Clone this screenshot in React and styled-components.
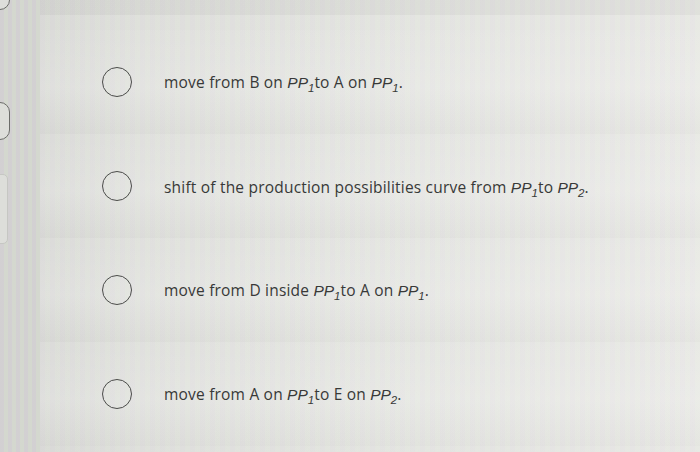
import * as React from 'react';
import styled, { createGlobalStyle } from 'styled-components';

const GlobalStyle = createGlobalStyle`
  html, body {
    margin: 0;
    padding: 0;
    width: 700px;
    height: 452px;
    overflow: hidden;
    background: #dcddd9;
  }
`;

const Screen = styled.div`
  width: 700px;
  height: 452px;
  display: flex;
  font-family: 'Open Sans', Lato, sans-serif;
  color: #383938;
  background: linear-gradient(90deg, #d9dad6 0%, #e1e2de 20%, #e7e8e4 60%, #ebebe8 100%);
`;

const Sidebar = styled.div`
  width: 40px;
  flex-shrink: 0;
  display: flex;
  flex-direction: column;
  background:
    repeating-linear-gradient(90deg, rgba(200, 190, 205, 0.3) 0 4px, rgba(205, 215, 195, 0.3) 4px 8px),
    #d7d8d4;
`;

const Tab = styled.div`
  margin-left: -14px;
  width: ${({ $w }) => $w}px;
  height: ${({ $h }) => $h}px;
  margin-top: ${({ $top }) => $top}px;
  border: 1.5px solid ${({ $faint }) => ($faint ? '#c6c7c3' : '#6b6c69')};
  border-radius: ${({ $faint }) => ($faint ? '5px' : '10px')};
  background: #dddeda;
  flex-shrink: 0;
`;

const Main = styled.div`
  flex: 1;
  display: flex;
  flex-direction: column;
  padding-top: 30px;
  background:
    linear-gradient(180deg, rgba(0, 0, 0, 0.035) 0 15px, rgba(255, 255, 255, 0) 15px),
    repeating-linear-gradient(90deg, rgba(205, 195, 210, 0.14) 0 5px, rgba(210, 220, 200, 0.14) 5px 10px);
`;

const Option = styled.div`
  height: 104px;
  display: flex;
  align-items: center;
  padding-left: 62px;
  gap: 32px;
  background: linear-gradient(180deg, rgba(255, 255, 255, 0.05) 0%, rgba(255, 255, 255, 0.16) 55%, rgba(0, 0, 0, 0.012) 100%);
`;

const Radio = styled.span`
  width: 28px;
  height: 28px;
  border: 1.6px solid #4b4c4a;
  border-radius: 50%;
  flex-shrink: 0;
`;

const Label = styled.span`
  font-size: 15.5px;
  letter-spacing: 0.2px;
  white-space: nowrap;
  margin-top: ${({ $drop }) => $drop || 0}px;
`;

const Var = styled.i`
  font-style: italic;
  font-family: 'Liberation Sans', Arial, sans-serif;
  font-size: 15.5px;
  letter-spacing: 0;
`;

const Sub = styled.sub`
  font-size: 11.5px;
  vertical-align: -4px;
  line-height: 0;
  font-style: italic;
  font-family: 'Liberation Sans', Arial, sans-serif;
`;

const PP = ({ n }) => (
  <Var>
    PP<Sub>{n}</Sub>
  </Var>
);

const options = [
  { key: 'a', drop: 0, text: <>move from B on <PP n="1" />to A on <PP n="1" />.</> },
  { key: 'b', drop: 2, text: <>shift of the production possibilities curve from <PP n="1" />to <PP n="2" />.</> },
  { key: 'c', drop: 0, text: <>move from D inside <PP n="1" />to A on <PP n="1" />.</> },
  { key: 'd', drop: 0, text: <>move from A on <PP n="1" />to E on <PP n="2" />.</> },
];

const App = () => (
  <>
    <GlobalStyle />
    <Screen>
      <Sidebar>
        <Tab $w={22} $h={22} $top={-14} />
        <Tab $w={22} $h={36} $top={92} />
        <Tab $w={20} $h={68} $top={34} $faint />
      </Sidebar>
      <Main>
        {options.map((o) => (
          <Option key={o.key}>
            <Radio />
            <Label $drop={o.drop}>{o.text}</Label>
          </Option>
        ))}
      </Main>
    </Screen>
  </>
);

export default App;
